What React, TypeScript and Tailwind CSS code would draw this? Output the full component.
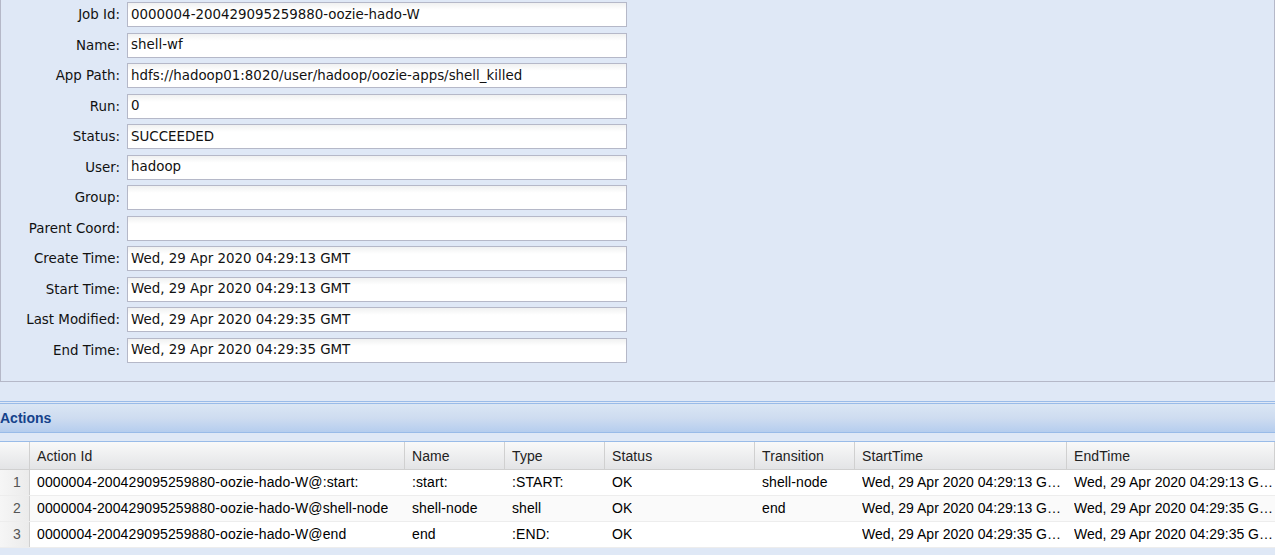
const fields: [string, string][] = [
  ["Job Id", "0000004-200429095259880-oozie-hado-W"],
  ["Name", "shell-wf"],
  ["App Path", "hdfs://hadoop01:8020/user/hadoop/oozie-apps/shell_killed"],
  ["Run", "0"],
  ["Status", "SUCCEEDED"],
  ["User", "hadoop"],
  ["Group", ""],
  ["Parent Coord", ""],
  ["Create Time", "Wed, 29 Apr 2020 04:29:13 GMT"],
  ["Start Time", "Wed, 29 Apr 2020 04:29:13 GMT"],
  ["Last Modified", "Wed, 29 Apr 2020 04:29:35 GMT"],
  ["End Time", "Wed, 29 Apr 2020 04:29:35 GMT"],
];

const columns = [
  { title: "Action Id", w: "w-[375px]", cell: "pr-[2px]" },
  { title: "Name", w: "w-[100px]", cell: "pr-[2px]" },
  { title: "Type", w: "w-[100px]", cell: "pr-[2px]" },
  { title: "Status", w: "w-[150px]", cell: "pr-[2px]" },
  { title: "Transition", w: "w-[100px]", cell: "pr-[2px]" },
  { title: "StartTime", w: "w-[212px]", cell: "pr-[2px] tracking-normal" },
  { title: "EndTime", w: "flex-1", cell: "pr-0 tracking-normal" },
];

const actions = [
  [
    "0000004-200429095259880-oozie-hado-W@:start:",
    ":start:",
    ":START:",
    "OK",
    "shell-node",
    "Wed, 29 Apr 2020 04:29:13 GMT",
    "Wed, 29 Apr 2020 04:29:13 GMT",
  ],
  [
    "0000004-200429095259880-oozie-hado-W@shell-node",
    "shell-node",
    "shell",
    "OK",
    "end",
    "Wed, 29 Apr 2020 04:29:13 GMT",
    "Wed, 29 Apr 2020 04:29:35 GMT",
  ],
  [
    "0000004-200429095259880-oozie-hado-W@end",
    "end",
    ":END:",
    "OK",
    "",
    "Wed, 29 Apr 2020 04:29:35 GMT",
    "Wed, 29 Apr 2020 04:29:35 GMT",
  ],
];

export default function App() {
  return (
    <div className="w-[1275px] h-[555px] overflow-hidden bg-[#dfe8f6]">
      {/* job detail form */}
      <div className="h-[382px] border-x border-b border-[#b5b8c8] pt-[2px] flex flex-col gap-[5.5px] font-['DejaVu_Sans',sans-serif] text-[13.4px] text-[#111]">
        {fields.map(([label, value]) => (
          <div key={label} className="flex items-center h-[25px]">
            <div className="w-[120px] text-right pr-[1px] pt-[1px] shrink-0 leading-none">{label}:</div>
            <div className="w-[500px] h-[25px] ml-[6px] border border-[#b5b8c8] bg-gradient-to-b from-[#f0f1f1] to-white to-[30%] px-[3px] pt-[1px] flex items-center whitespace-nowrap overflow-hidden">
              {value}
            </div>
          </div>
        ))}
      </div>

      {/* actions panel */}
      <div className="mt-[19px] border-t-[3px] border-double border-[#99bbe8]" />
      <div className="h-[29px] border-b border-[#99bbe8] bg-gradient-to-b from-[#dae6f4] via-[#cedcf0] to-[#b5cdee] flex items-center pt-[1px]">
        <span className="font-['Liberation_Sans',Arial,sans-serif] font-bold text-[14px] text-[#15428b]">Actions</span>
      </div>
      <div className="h-[9px] bg-[#dfe8f6] border-b border-[#99bbe8]" />

      <div className="font-['Liberation_Sans',Arial,sans-serif] text-[14px] tracking-[0.1px] text-black bg-white">
        <div className="flex h-[28px] bg-gradient-to-b from-[#f9f9f9] to-[#e3e4e6] border-b border-[#d0d0d0]">
          <div className="w-[30px] shrink-0 border-r border-[#d0d0d0]" />
          {columns.map((c) => (
            <div key={c.title} className={`${c.w} shrink-0 border-r border-[#d0d0d0] pl-[7px] pr-[2px] pt-[1px] flex items-center text-[#222]`}>
              {c.title}
            </div>
          ))}
        </div>
        {actions.map((row, i) => (
          <div key={i} className={`flex h-[26px] border-b border-[#ededed] ${i % 2 === 1 ? "bg-[#fafafa]" : "bg-white"}`}>
            <div className="w-[30px] shrink-0 bg-gradient-to-r from-[#f6f6f6] to-[#ebebeb] border-r border-[#d0d0d0] flex items-center justify-end pr-[8px] text-[#555]">
              {i + 1}
            </div>
            {row.map((cell, j) => (
              <div key={j} className={`${columns[j].w} ${columns[j].cell} shrink-0 min-w-0 pl-[7px] flex items-center`}>
                <span className="truncate">{cell}</span>
              </div>
            ))}
          </div>
        ))}
      </div>
    </div>
  );
}
